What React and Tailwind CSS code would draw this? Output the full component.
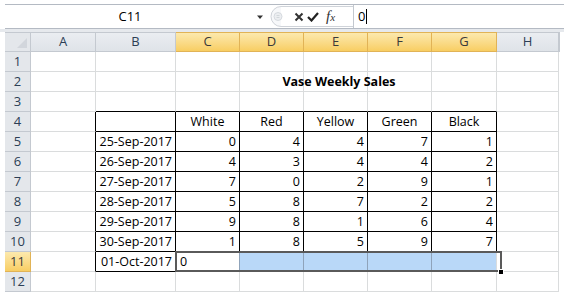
import React from 'react';

// Column widths in px (right gridline included)
const COLS = [
  { key: 'A', w: 'w-[65px]' },
  { key: 'B', w: 'w-[80px]' },
  { key: 'C', w: 'w-[64px]' },
  { key: 'D', w: 'w-[64px]' },
  { key: 'E', w: 'w-[64px]' },
  { key: 'F', w: 'w-[64px]' },
  { key: 'G', w: 'w-[65px]' },
  { key: 'H', w: 'w-[62px]' },
];

const HOT_COLS = ['C', 'D', 'E', 'F', 'G'];

const HEADERS = ['White', 'Red', 'Yellow', 'Green', 'Black'];

const DATA = [
  ['25-Sep-2017', 0, 4, 4, 7, 1],
  ['26-Sep-2017', 4, 3, 4, 4, 2],
  ['27-Sep-2017', 7, 0, 2, 9, 1],
  ['28-Sep-2017', 5, 8, 7, 2, 2],
  ['29-Sep-2017', 9, 8, 1, 6, 4],
  ['30-Sep-2017', 1, 8, 5, 9, 7],
];

function cellFor(r, c) {
  // r = row number (1-based), c = column index (0 = A)
  const inTable = r >= 4 && r <= 11 && c >= 1 && c <= 6;
  let text = '';
  let align = 'justify-end pr-[3px]';
  let border = 'border-r border-b border-[#dadcdd]';
  let bg = '';

  if (inTable) {
    if (r === 11 && c >= 2) {
      border = c === 6
        ? 'border-r border-b border-[#dadcdd]'
        : 'border-r border-b border-[#8fa3ba]';
      if (c >= 3) bg = 'bg-[#b9d8f8]';
    } else {
      border = 'border-r border-b border-black';
    }
  } else if (r === 3 && c >= 1 && c <= 6) {
    border = 'border-r border-b border-[#dadcdd] border-b-black';
  } else if (c === 0 && r >= 4 && r <= 11) {
    border = 'border-r border-b border-[#dadcdd] border-r-black';
  }

  if (r === 4 && c >= 2 && c <= 6) {
    text = HEADERS[c - 2];
    align = 'justify-center';
  }
  if (r >= 5 && r <= 10 && c >= 1 && c <= 6) {
    text = String(DATA[r - 5][c - 1]);
  }
  if (r === 11 && c === 1) text = '01-Oct-2017';
  if (r === 11 && c === 2) {
    text = '0';
    align = 'justify-start pl-[4px]';
  }
  return { text, align, border, bg };
}

function FormulaBar() {
  return (
    <div className="h-[32px] flex flex-col">
      <div className="h-[4px]" />
      <div className="h-[25px] border-t border-b border-[#b4bac3] flex items-center ml-[5px]">
        <div className="w-[250px] text-center text-[13px] text-black">C11</div>
        <svg width="8" height="6" viewBox="0 0 8 6" className="ml-[1px]">
          <path d="M1 1.5 L7 1.5 L4 5 Z" fill="#333" />
        </svg>
        <div className="ml-[5px] h-[21px] w-[84px] flex items-center relative">
          <svg width="84" height="21" viewBox="0 0 84 21" className="absolute left-0 top-0">
            <path d="M12 0.5 L84 0.5 M12 20.5 L84 20.5 M12 0.5 A10 10 0 0 0 12 20.5" fill="#f7f8fa" stroke="#cfd3d9" />
            <circle cx="9" cy="10.5" r="4" fill="#eceef1" stroke="#d6dadf" />
            <path d="M7.5 9.5 H10.5 M7.5 11.5 H10.5" stroke="#cbd0d6" strokeWidth="0.8" />
          </svg>
          <div className="relative flex items-center ml-[25px] gap-[3px]">
            <svg width="10" height="10" viewBox="0 0 10 10">
              <path d="M1.5 1.5 L8.5 8.5 M8.5 1.5 L1.5 8.5" stroke="#333" strokeWidth="2" />
            </svg>
            <svg width="12" height="10" viewBox="0 0 12 10">
              <path d="M1 5 L4.5 8.5 L11 1" stroke="#222" strokeWidth="2.2" fill="none" />
            </svg>
            <span className="ml-[4px] text-[15px] italic text-[#333] leading-none" style={{ fontFamily: '"Liberation Serif", serif' }}>
              f<span className="text-[11px]">x</span>
            </span>
          </div>
        </div>
        <div className="h-full border-l border-[#c3c8cf] flex items-center pl-[4px] text-[13px] text-black flex-1">
          0<span className="inline-block w-px h-[15px] bg-black ml-px" />
        </div>
      </div>
      <div className="h-[3px] bg-[#e6e9ed]" />
    </div>
  );
}

function ColumnHeaders() {
  return (
    <div className="h-[20px] flex ml-[5px]">
      <div className="w-[26px] h-full bg-[#e4e7eb] border-r border-b border-t border-[#c4c9d0] relative">
        <svg width="12" height="12" viewBox="0 0 12 12" className="absolute right-[2px] bottom-[2px]">
          <path d="M11 1 L11 11 L1 11 Z" fill="#d2d6dc" />
        </svg>
      </div>
      {COLS.map(({ key, w }) => {
        const hot = HOT_COLS.includes(key);
        return (
          <div
            key={key}
            className={`${w} h-full flex items-center justify-center text-[13px] border-r border-b border-t ${
              hot
                ? 'bg-gradient-to-b from-[#fce9ad] to-[#f8ce62] border-[#e1b356] text-[#3a3a3a]'
                : 'bg-gradient-to-b from-[#eaedf1] to-[#dfe3e8] border-[#c4c9d0] text-[#2c3e55]'
            }`}
          >
            {key}
          </div>
        );
      })}
      <div className="flex-1 border-l border-[#c4c9d0]" />
    </div>
  );
}

function Row({ r }) {
  const hot = r === 11;
  return (
    <div className="h-[20px] flex ml-[5px] relative">
      <div
        className={`w-[26px] h-full flex items-center justify-center text-[13px] border-r border-b ${
          hot
            ? 'bg-gradient-to-b from-[#fce9ad] to-[#f8ce62] border-[#e1b356] text-[#3a3a3a]'
            : 'bg-[#e4e7eb] border-[#c4c9d0] text-[#2c3e55]'
        }`}
      >
        {r}
      </div>
      {COLS.map(({ key, w }, c) => {
        const cell = cellFor(r, c);
        return (
          <div
            key={key}
            className={`${w} h-full flex items-center pt-[1px] whitespace-nowrap overflow-hidden text-[12.5px] text-black ${cell.align} ${cell.border} ${cell.bg}`}
          >
            {cell.text}
          </div>
        );
      })}
      {r === 2 && (
        <div className="absolute left-[171px] w-[326px] h-full flex items-center justify-center pt-[1px] text-[12.5px] font-bold text-black">
          Vase Weekly Sales
        </div>
      )}
      {hot && (
        <>
          <div className="absolute left-[170px] top-[-1px] w-[327px] h-[21px] border-2 border-[#5a5a5a] pointer-events-none" />
          <div className="absolute left-[493px] top-[17px] w-[6px] h-[6px] bg-black border border-white" />
        </>
      )}
    </div>
  );
}

export default function App() {
  const rows = Array.from({ length: 12 }, (_, i) => i + 1);
  return (
    <div
      className="w-[564px] h-[295px] bg-white overflow-hidden"
      style={{ fontFamily: '"Open Sans", "Noto Sans", sans-serif' }}
    >
      <FormulaBar />
      <ColumnHeaders />
      {rows.map((r) => (
        <Row key={r} r={r} />
      ))}
    </div>
  );
}
